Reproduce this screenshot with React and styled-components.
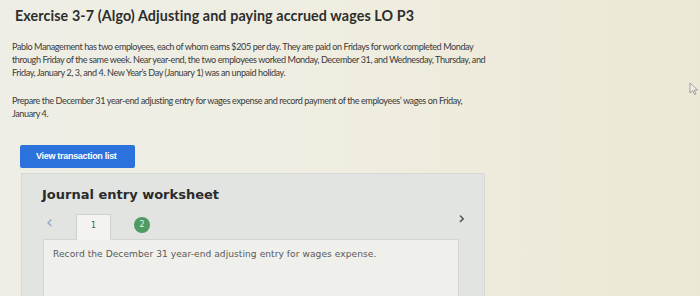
import React from 'react'
import styled, { createGlobalStyle } from 'styled-components'

const GlobalStyle = createGlobalStyle`
  html, body {
    margin: 0;
    padding: 0;
  }
  body {
    width: 700px;
    height: 296px;
    overflow: hidden;
    background: linear-gradient(90deg, #eeeee6 0%, #efede0 50%, #ece8d6 100%);
    font-family: Lato, "Open Sans", sans-serif;
  }
`

const Page = styled.div`
  position: relative;
  width: 700px;
  height: 296px;
  padding: 7px 0 0 15px;
  box-sizing: border-box;
`

const Title = styled.h1`
  margin: 0;
  font-family: Lato, sans-serif;
  font-weight: 700;
  font-size: 14.3px;
  line-height: 17px;
  color: #2d2d2d;
  letter-spacing: 0.1px;
`

const Para = styled.p`
  margin: ${p => p.$top}px 0 0 -3px;
  font-family: Lato, sans-serif;
  font-weight: 400;
  font-size: 9.1px;
  line-height: 13px;
  color: #3a3a3a;
  letter-spacing: -0.42px;
`

const Button = styled.button`
  display: block;
  margin: 25px 0 0 5px;
  width: 115px;
  height: 23px;
  border: none;
  border-radius: 2px;
  background: #2c72dc;
  color: #fff;
  font-family: "Liberation Sans", Arial, sans-serif;
  font-weight: 700;
  font-size: 9px;
  text-align: left;
  padding: 0 0 2px 16px;
  letter-spacing: -0.3px;
`

const Worksheet = styled.section`
  margin: 5px 0 0 6px;
  width: 464px;
  height: 130px;
  background: #e2e4e1;
  border: 1px solid #d6d9d6;
  box-sizing: border-box;
  padding: 12px 0 0 20px;
  position: relative;
`

const SheetTitle = styled.h2`
  margin: 0;
  font-family: "DejaVu Sans", Verdana, sans-serif;
  font-weight: 700;
  font-size: 13px;
  line-height: 17px;
  color: #2b2b2b;
`

const TabRow = styled.div`
  display: flex;
  align-items: center;
  height: 26px;
  margin: 10px 0 0 0;
  width: 423px;
  position: relative;
`

const Chevron = styled.span`
  font-family: "DejaVu Sans", sans-serif;
  font-size: 17px;
  line-height: 17px;
  color: ${p => p.$color};
  width: ${p => p.$w}px;
  text-align: ${p => p.$align};
  margin-top: ${p => p.$up}px;
  padding-left: ${p => p.$pad}px;
  box-sizing: border-box;
`

const Tab = styled.div`
  width: 35px;
  height: 26px;
  margin-left: 20px;
  background: #f3f3f0;
  border: 1px solid #cfd1ce;
  border-bottom: none;
  box-sizing: border-box;
  display: flex;
  justify-content: center;
  padding-top: 6px;
  font-family: "DejaVu Sans", sans-serif;
  font-size: 8px;
  color: #555;
  position: relative;
  z-index: 2;
  margin-bottom: -1px;
`

const Step = styled.div`
  width: 16px;
  height: 16px;
  border-radius: 50%;
  background: #4d9a62;
  color: #e8f2ea;
  font-family: "DejaVu Sans", sans-serif;
  font-size: 8px;
  display: flex;
  align-items: center;
  justify-content: center;
  margin-left: 23px;
  margin-top: -3px;
`

const Spacer = styled.div`
  flex: 1;
`

const Entry = styled.div`
  width: 416px;
  height: 60px;
  margin-left: 1px;
  background: #efefec;
  border: 1px solid #d3d5d2;
  border-bottom: none;
  box-sizing: border-box;
  padding: 9px 0 0 9px;
  font-family: "DejaVu Sans", Verdana, sans-serif;
  font-size: 9.1px;
  color: #5a5a5a;
  letter-spacing: 0.05px;
`

const Cursor = styled.svg`
  position: absolute;
  left: 689px;
  top: 82px;
`

export default function App() {
  return (
    <Page>
      <GlobalStyle />
      <Title>Exercise 3-7 (Algo) Adjusting and paying accrued wages LO P3</Title>
      <Para $top={16}>
        Pablo Management has two employees, each of whom earns $205 per day. They are paid on Fridays for work completed Monday
        <br />
        through Friday of the same week. Near year-end, the two employees worked Monday, December 31, and Wednesday, Thursday, and
        <br />
        Friday, January 2, 3, and 4. New Year’s Day (January 1) was an unpaid holiday.
      </Para>
      <Para $top={15}>
        Prepare the December 31 year-end adjusting entry for wages expense and record payment of the employees’ wages on Friday,
        <br />
        January 4.
      </Para>
      <Button>View transaction list</Button>
      <Worksheet>
        <SheetTitle>Journal entry worksheet</SheetTitle>
        <TabRow>
          <Chevron $color="#8fa7c4" $w={14} $align="left" $up={-8} $pad={4}>‹</Chevron>
          <Tab>1</Tab>
          <Step>2</Step>
          <Spacer />
          <Chevron $color="#444" $w={20} $align="right" $up={-16} $pad={0}>›</Chevron>
        </TabRow>
        <Entry>Record the December 31 year-end adjusting entry for wages expense.</Entry>
      </Worksheet>
      <Cursor width="10" height="14" viewBox="0 0 10 14">
        <path d="M1 1 L1 11 L3.5 8.5 L5.5 12.5 L7 11.8 L5 8 L8.5 8 Z" fill="#f4f2ea" stroke="#8a8a8a" strokeWidth="0.8" />
      </Cursor>
    </Page>
  )
}
